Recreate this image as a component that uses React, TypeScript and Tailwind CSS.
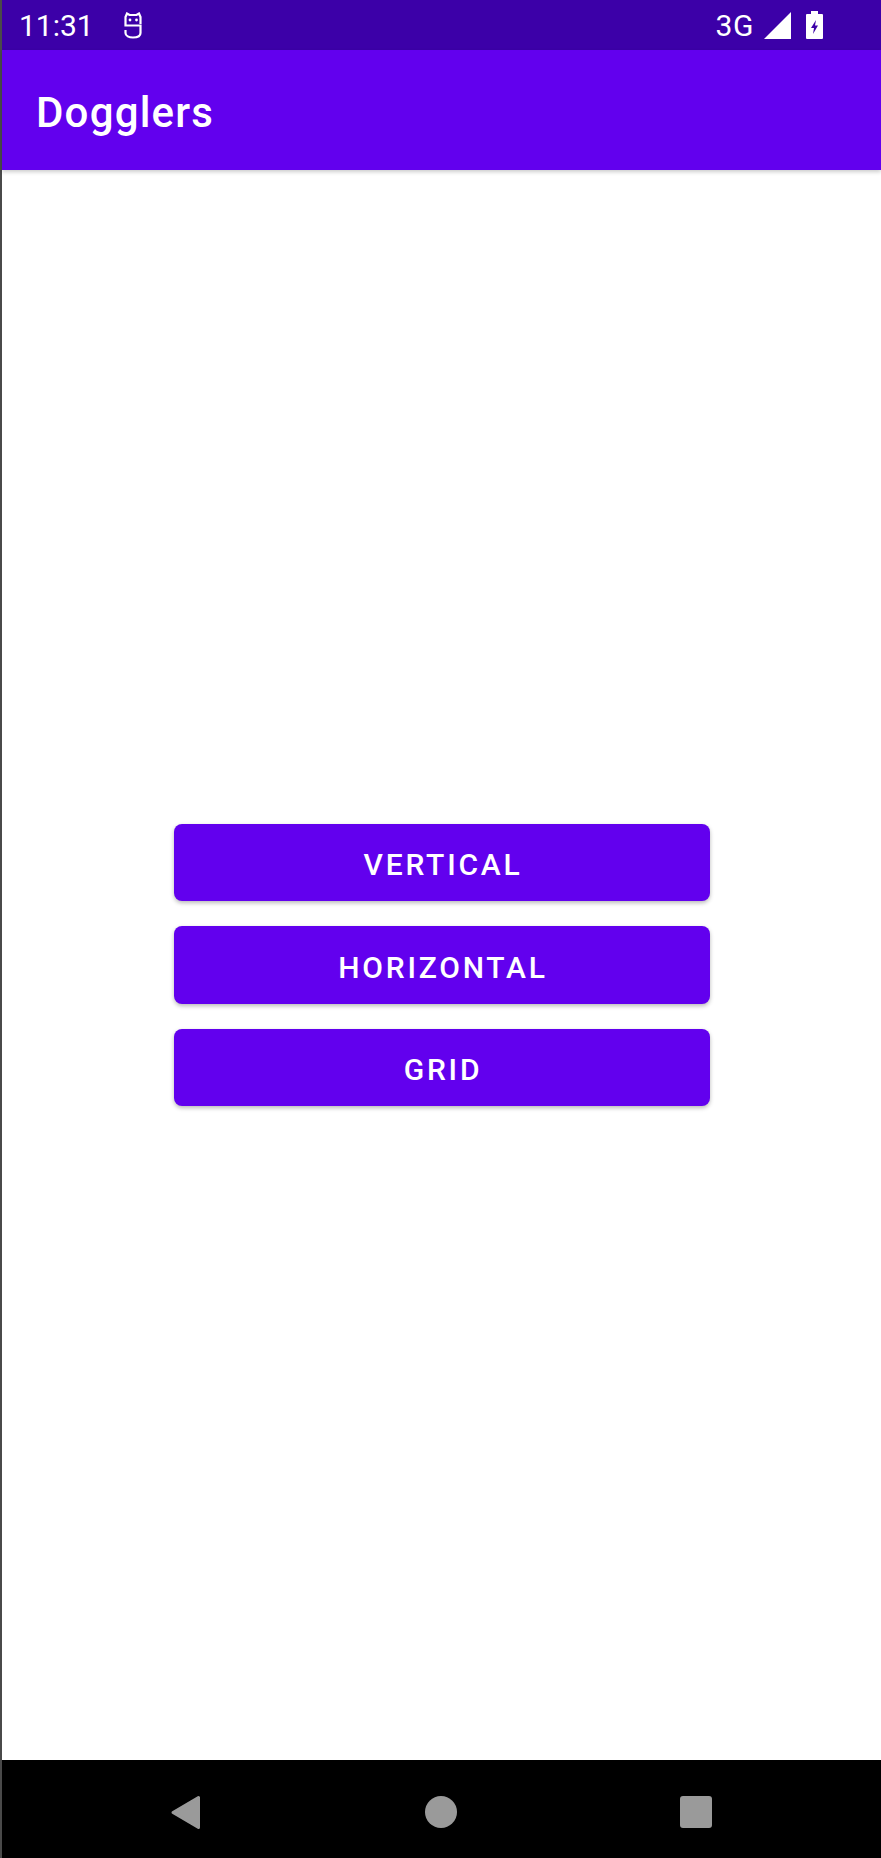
const buttons = ['VERTICAL', 'HORIZONTAL', 'GRID']

function NotifIcon() {
  return (
    <svg width="18" height="27" viewBox="0 0 18 27" fill="none" stroke="white" strokeWidth="2.2">
      <path d="M16.5 12 V5 L15 1.5 L12.5 3 H5.5 L3 1.5 L1.5 5 V13.5 H16.5 V21 C16.5 24 13 25.5 9 25.5 C5 25.5 1.5 24 1.5 21 V18" />
      <circle cx="6" cy="8" r="1.4" fill="white" stroke="none" />
      <circle cx="12.5" cy="8" r="1.4" fill="white" stroke="none" />
    </svg>
  )
}

function SignalIcon() {
  return (
    <svg width="27" height="27" viewBox="0 0 27 27">
      <path d="M0 27 L27 0 V27 Z" fill="white" />
    </svg>
  )
}

function BatteryIcon() {
  return (
    <svg width="17" height="28" viewBox="0 0 17 28">
      <path d="M5 0 H12 V3 H16 Q17 3 17 4 V27 Q17 28 16 28 H1 Q0 28 0 27 V4 Q0 3 1 3 H5 Z" fill="white" />
      <path d="M10 9 L5 17 H8 L7 23 L12 14.5 H9 Z" fill="#3c00a8" />
    </svg>
  )
}

export default function App() {
  return (
    <div className="flex h-[1858px] w-[881px] flex-col border-l-2 border-[#4a4a4a] bg-white font-['Roboto',sans-serif]">
      <div className="flex h-[50px] shrink-0 items-center bg-[#3c00a8] pl-[17px] pr-[58px] text-white">
        <span className="pt-[1px] text-[30px] leading-none">11:31</span>
        <span className="ml-[30px]">
          <NotifIcon />
        </span>
        <span className="ml-auto pt-[1px] text-[30px] leading-none tracking-[0.6px]">3G</span>
        <span className="ml-[10px]">
          <SignalIcon />
        </span>
        <span className="ml-[15px]">
          <BatteryIcon />
        </span>
      </div>

      <div className="flex h-[120px] shrink-0 items-center bg-[#6200ee] pl-[34px] pt-[6px] shadow-[0_2px_4px_rgba(0,0,0,0.2)]">
        <h1 className="text-[42px] font-medium leading-none tracking-[1.2px] text-white">Dogglers</h1>
      </div>

      <div className="flex flex-1 items-center justify-center pl-[1px]">
        <div className="flex w-[536px] flex-col gap-[25px]">
          {buttons.map((label) => (
            <button
              key={label}
              type="button"
              className="h-[77.5px] rounded-[8px] bg-[#6200ee] pl-[2px] pt-[4px] text-[30px] font-medium tracking-[2.8px] text-white shadow-[0_2px_4px_rgba(0,0,0,0.28)]"
            >
              {label}
            </button>
          ))}
        </div>
      </div>

      <div className="flex h-[98px] shrink-0 items-center justify-center bg-black pr-[2px] pt-[6px]">
        <div className="flex w-[542px] items-center justify-between">
          <svg width="31" height="35" viewBox="0 0 31 35">
            <path d="M3 17.5 L28.5 2.5 V32.5 Z" fill="#9a9a9a" stroke="#9a9a9a" strokeWidth="3" strokeLinejoin="round" />
          </svg>
          <div className="ml-[2px] h-[32px] w-[32px] rounded-full bg-[#9a9a9a]" />
          <div className="h-[32px] w-[32px] rounded-[3px] bg-[#9a9a9a]" />
        </div>
      </div>
    </div>
  )
}
